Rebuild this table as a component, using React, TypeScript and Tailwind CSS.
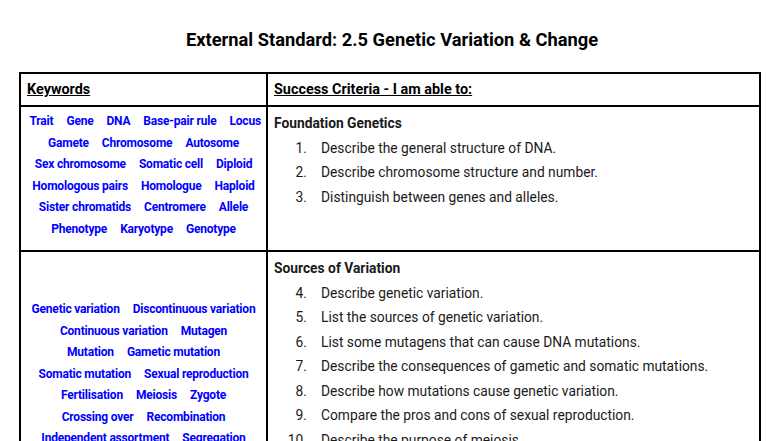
const font = { fontFamily: "Roboto, 'Noto Sans', sans-serif" };

const keywordsA = [
  ["Trait", "Gene", "DNA", "Base-pair rule", "Locus"],
  ["Gamete", "Chromosome", "Autosome"],
  ["Sex chromosome", "Somatic cell", "Diploid"],
  ["Homologous pairs", "Homologue", "Haploid"],
  ["Sister chromatids", "Centromere", "Allele"],
  ["Phenotype", "Karyotype", "Genotype"],
];

const keywordsB = [
  ["Genetic variation", "Discontinuous variation"],
  ["Continuous variation", "Mutagen"],
  ["Mutation", "Gametic mutation"],
  ["Somatic mutation", "Sexual reproduction"],
  ["Fertilisation", "Meiosis", "Zygote"],
  ["Crossing over", "Recombination"],
  ["Independent assortment", "Segregation"],
];

const foundation = [
  "Describe the general structure of DNA.",
  "Describe chromosome structure and number.",
  "Distinguish between genes and alleles.",
];

const sources = [
  "Describe genetic variation.",
  "List the sources of genetic variation.",
  "List some mutagens that can cause DNA mutations.",
  "Describe the consequences of gametic and somatic mutations.",
  "Describe how mutations cause genetic variation.",
  "Compare the pros and cons of sexual reproduction.",
  "Describe the purpose of meiosis.",
];

function Keywords({ lines }: { lines: string[][] }) {
  return (
    <div className="text-center text-[12px] font-bold leading-[21.5px] tracking-[-0.2px] text-[#0000ff]">
      {lines.map((line, i) => (
        <div key={i} className="whitespace-nowrap">
          {line.map((w) => (
            <span key={w} className="mx-[6.5px] inline-block">
              {w}
            </span>
          ))}
        </div>
      ))}
    </div>
  );
}

function Criteria({ title, items, start }: { title: string; items: string[]; start: number }) {
  return (
    <div className="text-[13.8px] leading-[24.5px] text-[#1a1a1a]">
      <div className="font-bold">{title}</div>
      {items.map((t, i) => (
        <div key={i} className="flex whitespace-nowrap">
          <span className="w-[33px] shrink-0 text-right">{start + i}.</span>
          <span className="ml-[14px]">{t}</span>
        </div>
      ))}
    </div>
  );
}

export default function App() {
  return (
    <div className="h-[441px] w-[784px] overflow-hidden bg-white" style={font}>
      <div className="pt-[28px] text-center text-[18.3px] font-bold leading-[24px] text-black">
        External Standard: 2.5 Genetic Variation &amp; Change
      </div>
      <table className="ml-[19px] mt-[20px] w-[742px] table-fixed border-collapse">
        <colgroup>
          <col className="w-[247px]" />
          <col />
        </colgroup>
        <tbody>
          <tr className="h-[33px]">
            <td className="border-2 border-black px-[6px] align-middle text-[14.4px] font-bold text-black underline">
              Keywords
            </td>
            <td className="border-2 border-black px-[6px] align-middle text-[14.4px] font-bold text-black underline">
              Success Criteria - I am able to:
            </td>
          </tr>
          <tr>
            <td className="border-2 border-black px-[2px] pb-[10px] pt-[4px] align-top">
              <Keywords lines={keywordsA} />
            </td>
            <td className="border-2 border-black px-[6px] pt-[4px] align-top">
              <Criteria title="Foundation Genetics" items={foundation} start={1} />
            </td>
          </tr>
          <tr>
            <td className="border-2 border-black px-[2px] pb-[20px] pt-[47px] align-top">
              <Keywords lines={keywordsB} />
            </td>
            <td className="border-2 border-black px-[6px] pt-[4px] align-top">
              <Criteria title="Sources of Variation" items={sources} start={4} />
            </td>
          </tr>
        </tbody>
      </table>
    </div>
  );
}
